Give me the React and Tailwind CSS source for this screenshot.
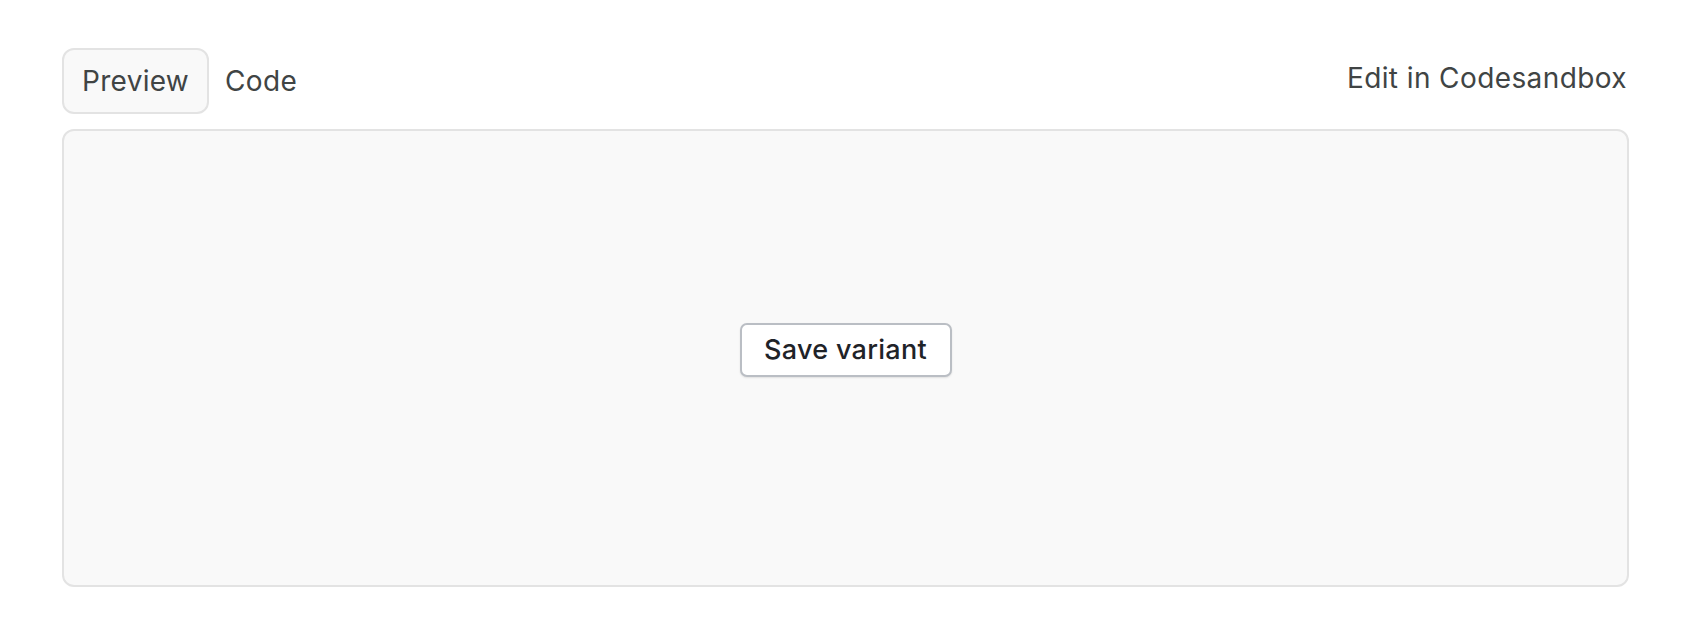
const App = () => {
    return (
        <div
            className="min-h-screen bg-white pt-[48px] pl-[62px] pr-[57px]"
            style={{ fontFamily: "Inter, 'Noto Sans', sans-serif" }}
        >
            <div className="flex items-center justify-between h-[66px]">
                <div className="flex items-center">
                    <button className="h-[66px] px-[18px] rounded-[12px] border-2 border-[#e3e3e3] bg-[#f9f9f9] text-[28px] tracking-[0.3px] text-[#404444]">
                        Preview
                    </button>
                    <button className="h-[66px] px-[16px] text-[28px] tracking-[0.3px] text-[#404444]">
                        Code
                    </button>
                </div>
                <a className="text-[28px] tracking-[0.4px] text-[#404444] -mt-[6px] pr-[2px]">
                    Edit in Codesandbox
                </a>
            </div>

            <div className="mt-[15px] h-[458px] rounded-[12px] border-2 border-[#e3e3e3] bg-[#f9f9f9] flex items-center justify-center pb-[16px]">
                <button className="h-[54px] w-[212px] rounded-[7px] border-2 border-[#babec4] bg-white text-[27px] tracking-[0.3px] font-medium text-[#1f2328] shadow-[0_1px_2px_rgba(0,0,0,0.1)]">
                    Save variant
                </button>
            </div>
        </div>
    );
};

export default App;
